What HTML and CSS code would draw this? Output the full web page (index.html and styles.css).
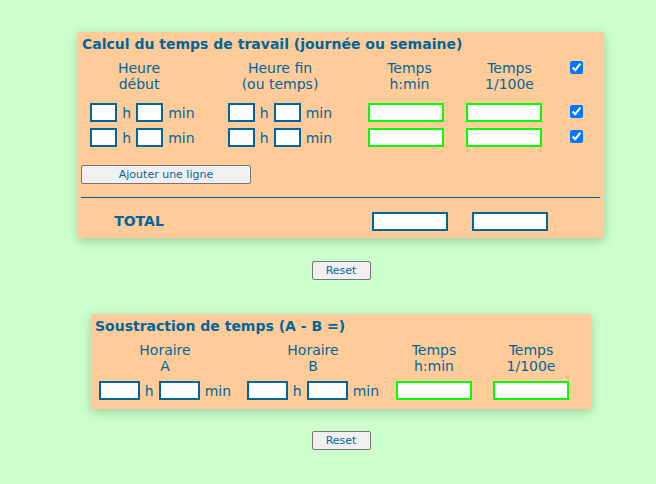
FILE: index.html
```html
<!DOCTYPE html>
<html lang="fr">
<head>
  <meta charset="UTF-8" />
  <meta name="viewport" content="width=device-width, initial-scale=1" />
  <title>Calcul du temps de travail</title>
  <link rel="stylesheet" href="styles.css">
</head>
<body>
  <div class="panel panel-work">
    <h2 class="panel-title">Calcul du temps de travail (journée ou semaine)</h2>

    <div class="work-grid work-head">
      <div class="c1">Heure<br>début</div>
      <div>Heure fin<br>(ou temps)</div>
      <div>Temps<br>h:min</div>
      <div>Temps<br>1/100e</div>
      <div class="check"><input type="checkbox" checked></div>
    </div>

    <div class="work-grid work-row">
      <div class="hm c1"><input type="text" class="num"><span>h</span><input type="text" class="num"><span>min</span></div>
      <div class="hm"><input type="text" class="num"><span>h</span><input type="text" class="num"><span>min</span></div>
      <div class="c3"><input type="text" class="res"></div>
      <div class="c4"><input type="text" class="res"></div>
      <div class="check"><input type="checkbox" checked></div>
    </div>

    <div class="work-grid work-row">
      <div class="hm c1"><input type="text" class="num"><span>h</span><input type="text" class="num"><span>min</span></div>
      <div class="hm"><input type="text" class="num"><span>h</span><input type="text" class="num"><span>min</span></div>
      <div class="c3"><input type="text" class="res"></div>
      <div class="c4"><input type="text" class="res"></div>
      <div class="check"><input type="checkbox" checked></div>
    </div>

    <button type="button" class="add-btn">Ajouter une ligne</button>
    <hr class="sep">

    <div class="work-grid total-row">
      <div class="total-label">TOTAL</div>
      <div></div>
      <div><input type="text" class="tot"></div>
      <div><input type="text" class="tot"></div>
      <div></div>
    </div>
  </div>

  <div class="reset-wrap"><button type="button" class="reset-btn">Reset</button></div>

  <div class="panel panel-sub">
    <h2 class="panel-title">Soustraction de temps (A - B =)</h2>

    <div class="sub-grid sub-head">
      <div>Horaire<br>A</div>
      <div>Horaire<br>B</div>
      <div>Temps<br>h:min</div>
      <div>Temps<br>1/100e</div>
    </div>

    <div class="sub-grid sub-row">
      <div class="hm"><input type="text" class="num wide"><span>h</span><input type="text" class="num wide"><span>min</span></div>
      <div class="hm"><input type="text" class="num wide"><span>h</span><input type="text" class="num wide"><span>min</span></div>
      <div><input type="text" class="res"></div>
      <div><input type="text" class="res"></div>
    </div>
  </div>

  <div class="reset-wrap reset-last"><button type="button" class="reset-btn">Reset</button></div>
</body>
</html>
```

FILE: styles.css
```css
body {
  margin: 0;
  padding: 32px 0 0 26px;
  background-color: #ccffcc;
  font-family: "DejaVu Sans", Verdana, sans-serif;
  font-size: 14px;
  color: #006699;
}

.panel {
  background-color: #ffcc99;
  box-shadow: 0 3px 10px rgba(0, 0, 0, 0.22);
  box-sizing: border-box;
  margin: 0 auto;
}

.panel-work {
  width: 526px;
  padding: 4px 4px 7px 3px;
}

.panel-sub {
  width: 500px;
  padding: 4px 4px 9px 3px;
  margin-top: 34px;
}

.panel-title {
  margin: 0;
  padding-left: 1px;
  font-size: 14px;
  line-height: 17px;
  font-weight: bold;
}

/* grille du premier tableau */
.work-grid {
  display: grid;
  grid-template-columns: 116px 166px 93px 107px 26px;
  text-align: center;
}

.sub-grid {
  display: grid;
  grid-template-columns: 142px 154px 88px 106px;
  text-align: center;
}

.work-head,
.sub-head {
  margin-top: 7px;
  line-height: 16px;
}

.work-row {
  margin-top: 6px;
  height: 19px;
  align-items: center;
}

.work-head + .work-row {
  margin-top: 11px;
}

.sub-row {
  margin-top: 7px;
  height: 19px;
  align-items: center;
}

.hm {
  display: flex;
  justify-content: center;
  align-items: center;
  gap: 5px;
}

.c1.hm {
  padding-left: 7px;
}

.c3 {
  padding-right: 7px;
}

.c4 {
  padding-right: 11px;
}

input[type="text"] {
  box-sizing: border-box;
  height: 19px;
  margin: 0;
  padding: 0 2px;
  border: 2px solid #006699;
  background-color: #fff;
  font-family: inherit;
  font-size: 12px;
  vertical-align: middle;
}

.num {
  width: 27px;
}

.num.wide {
  width: 41px;
}

input.res {
  width: 76px;
  border-color: #00ff00;
}

.tot {
  width: 76px;
}

.check {
  display: flex;
  justify-content: center;
  align-self: start;
}

.check input {
  width: 13px;
  height: 13px;
  margin: 2px 0 0;
}

.work-head .check input {
  margin-top: 1px;
}

.add-btn {
  display: block;
  width: 170px;
  height: 19px;
  margin-top: 18px;
  padding: 0;
  font-family: inherit;
  font-size: 11px;
  color: #006699;
  background-color: #f0f0f0;
  border: 1px solid #767676;
  border-radius: 2px;
}

.sep {
  margin: 13px 0 0;
  border: none;
  border-top: 1px solid #006699;
  height: 0;
}

.total-row {
  margin-top: 14px;
  height: 19px;
  align-items: center;
}

.total-label {
  font-weight: bold;
  line-height: 17px;
}

.reset-wrap {
  text-align: center;
  margin-top: 23px;
}

.reset-last {
  margin-top: 22px;
}

.reset-btn {
  width: 59px;
  height: 19px;
  padding: 0;
  font-family: inherit;
  font-size: 11px;
  color: #006699;
  background-color: #f0f0f0;
  border: 1px solid #767676;
  border-radius: 2px;
}
```
